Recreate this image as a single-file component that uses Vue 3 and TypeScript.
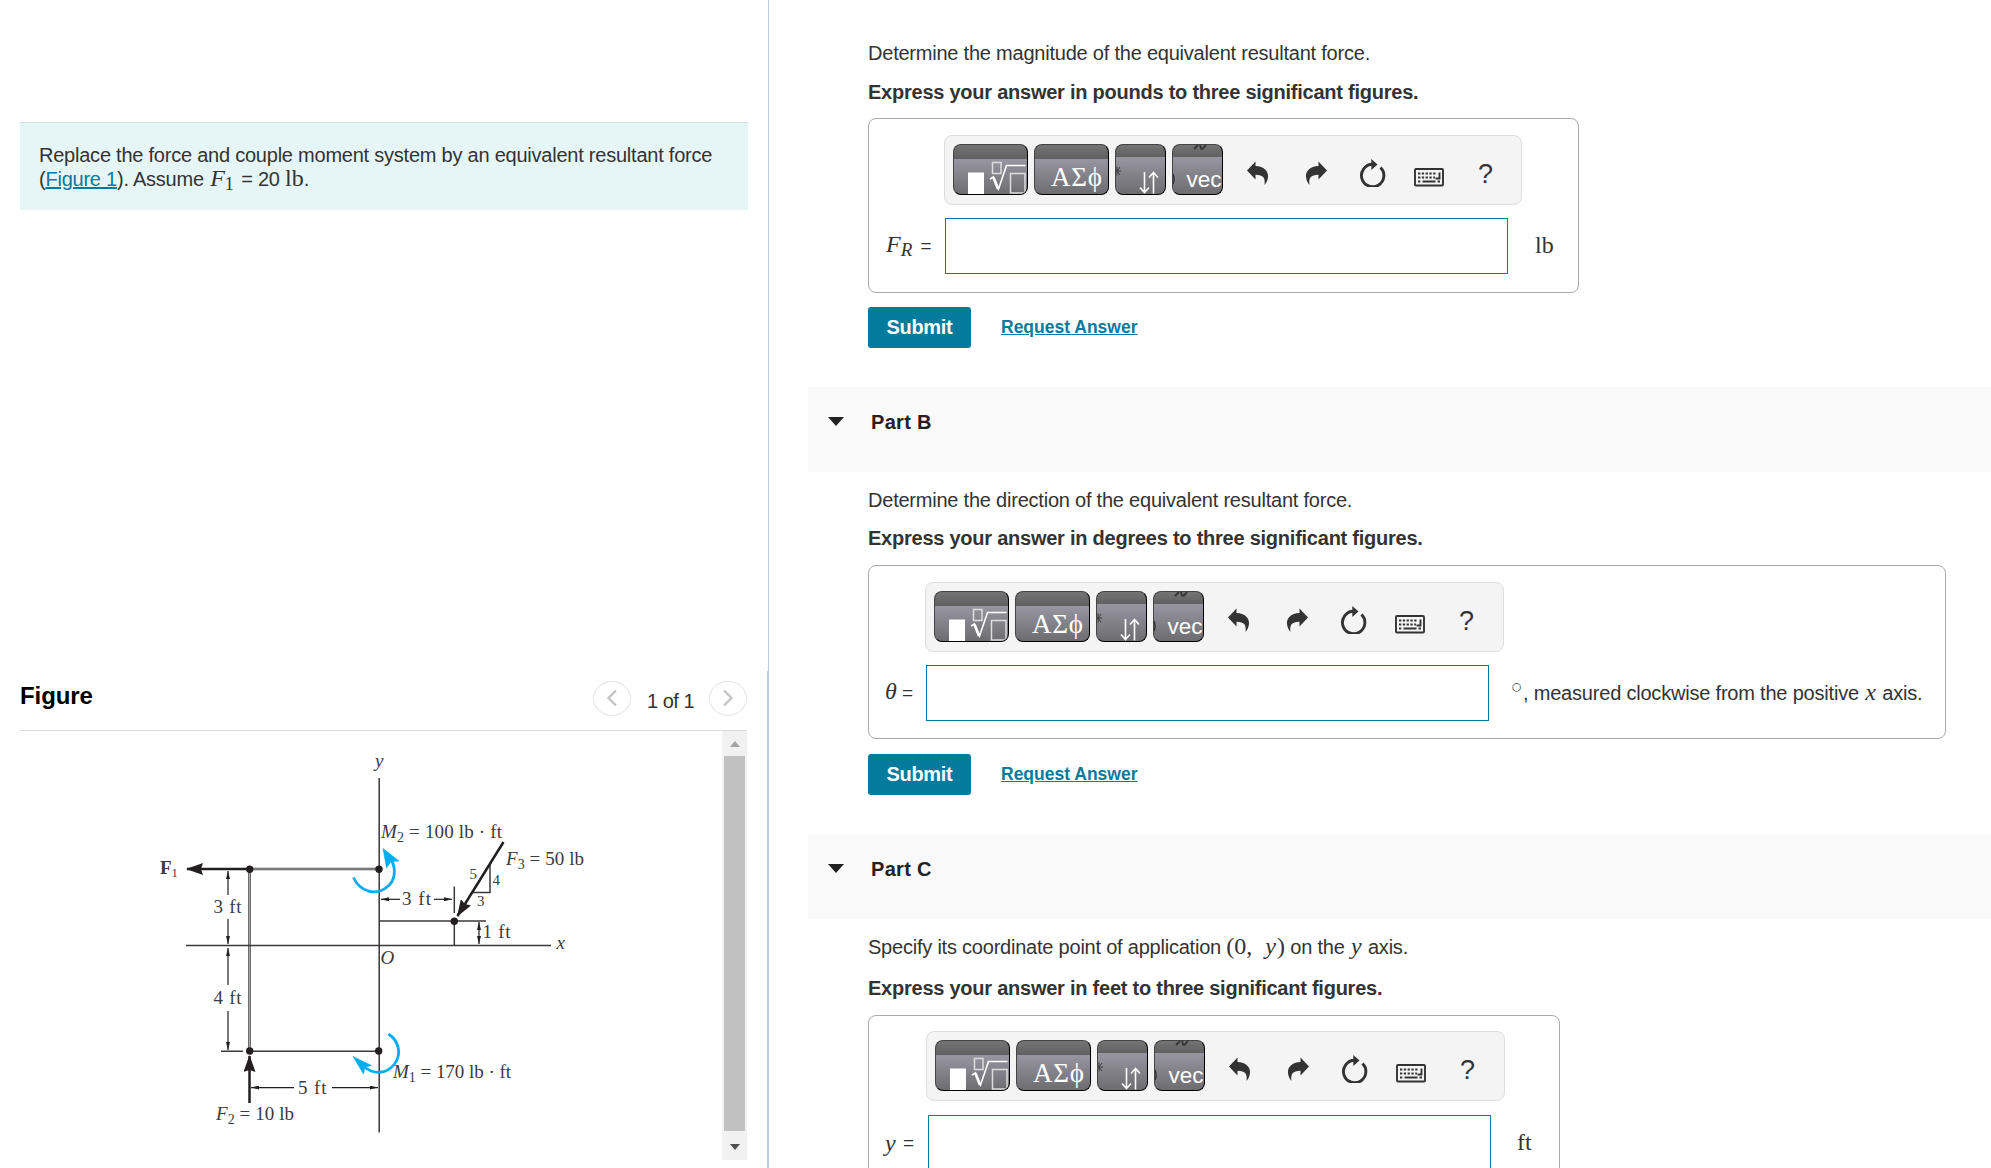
<script setup lang="ts">
import { ref } from 'vue'

interface Segment {
  text: string
  math?: 'italic' | 'roman' | 'sub' | 'deg'
}

interface Part {
  id: string
  title?: string
  prompt: Segment[]
  instruction: string
  label: Segment[]
  unit: Segment[]
  submittable?: boolean
}

const parts: Part[] = [
  {
    id: 'a',
    prompt: [{ text: 'Determine the magnitude of the equivalent resultant force.' }],
    instruction: 'Express your answer in pounds to three significant figures.',
    label: [{ text: 'F', math: 'italic' }, { text: 'R', math: 'sub' }],
    unit: [{ text: 'lb', math: 'roman' }],
    submittable: true,
  },
  {
    id: 'b',
    title: 'Part B',
    prompt: [{ text: 'Determine the direction of the equivalent resultant force.' }],
    instruction: 'Express your answer in degrees to three significant figures.',
    label: [{ text: 'θ', math: 'italic' }],
    unit: [
      { text: '○', math: 'deg' },
      { text: ', measured clockwise from the positive ' },
      { text: 'x', math: 'italic' },
      { text: ' axis.' },
    ],
    submittable: true,
  },
  {
    id: 'c',
    title: 'Part C',
    prompt: [
      { text: 'Specify its coordinate point of application ' },
      { text: '(0,\u2002', math: 'roman' },
      { text: 'y', math: 'italic' },
      { text: ')', math: 'roman' },
      { text: ' on the ' },
      { text: 'y', math: 'italic' },
      { text: ' axis.' },
    ],
    instruction: 'Express your answer in feet to three significant figures.',
    label: [{ text: 'y', math: 'italic' }],
    unit: [{ text: 'ft', math: 'roman' }],
  },
]

const answers = ref<Record<string, string>>({ a: '', b: '', c: '' })
</script>

<template>
  <div class="page">
    <aside class="left">
      <div class="problem">
        <span class="line">Replace the force and couple moment system by an equivalent resultant force</span><br />
        <span class="line">(<a href="#">Figure 1</a>). Assume <i class="italic force">F</i><span class="one">1</span> = 20 <span class="roman">lb</span>.</span>
      </div>

      <section class="figure">
        <header class="figure-head">
          <h2>Figure</h2>
          <div class="pager">
            <button class="round" aria-label="Previous">
              <svg width="12" height="18" viewBox="0 0 12 18"><path d="M10 1.5 2.5 9l7.5 7.5" /></svg>
            </button>
            <span>1 of 1</span>
            <button class="round" aria-label="Next">
              <svg width="12" height="18" viewBox="0 0 12 18"><path d="M2 1.5 9.5 9 2 16.5" /></svg>
            </button>
          </div>
        </header>
        <div class="figure-body">
          <svg class="diagram" width="702" height="429" viewBox="20 731 702 429">
            <defs>
              <marker id="dim" viewBox="0 0 8 4" refX="8" refY="2" markerWidth="8" markerHeight="4" markerUnits="userSpaceOnUse" orient="auto-start-reverse">
                <path d="M0 0 8 2 0 4z" fill="#231f20" />
              </marker>
              <marker id="force" viewBox="0 0 17 12" refX="16" refY="6" markerWidth="17" markerHeight="12" markerUnits="userSpaceOnUse" orient="auto">
                <path d="M0 0 17 6 0 12 2 6z" fill="#231f20" />
              </marker>
            </defs>
            <g class="member">
              <path d="M249.5 869H379M249.5 869V1051" class="edge" />
              <path d="M249.5 869H379M249.5 869V1051" class="core" />
              <path d="M249.5 1051.3H379M379 921H486M454.3 921V945.5" />
              <path d="M379.2 778V1132.5M186 945.6H551" />
              <path d="M454.3 886.5V913M221 1051.3H243M473 892.5H490V865" />
            </g>
            <g class="dims">
              <path d="M228 895V871" /><path d="M228 919V944" />
              <path d="M228 985V948" /><path d="M228 1011V1050" />
              <path d="M294 1087.6H251" /><path d="M332 1087.6H378" />
              <path d="M400 899.3H381" /><path d="M434 899.3H452" />
              <path d="M479 933V922" /><path d="M479 933V944" />
            </g>
            <g class="forces">
              <path d="M249 869H187" />
              <path d="M249.5 1103V1056" />
              <path d="M503.5 842 457.5 916" />
            </g>
            <g fill="#231f20">
              <circle cx="249.7" cy="869.3" r="3.7" />
              <circle cx="379" cy="869.3" r="3.7" />
              <circle cx="249.7" cy="1051" r="3.7" />
              <circle cx="378.7" cy="1051" r="3.7" />
              <circle cx="454.3" cy="921.3" r="3.7" />
            </g>
            <g class="moment">
              <path d="M353.5 877.5C360 892 376 896 387 887 395 881 396.5 870 391.5 860" />
              <path d="M388.5 1034C399 1041 402 1054 394.5 1064 387 1074 374 1075 364.5 1067" />
              <path class="tip" d="M383 848.5 399 861 391 861.5 386.5 868z" />
              <path class="tip" d="M353 1056.5 371.5 1065.5 365 1067 363.5 1074z" />
            </g>
            <g class="labels">
              <text x="375" y="767" class="it">y</text>
              <text x="556.5" y="949" class="it">x</text>
              <text x="380.5" y="964" class="it">O</text>
              <text x="160" y="874"><tspan font-weight="bold">F</tspan><tspan dy="3" font-size="12.5">1</tspan></text>
              <text x="381" y="838" textLength="121"><tspan class="it">M</tspan><tspan dy="4" font-size="14">2</tspan><tspan dy="-4"> = 100 lb · ft</tspan></text>
              <text x="506" y="865" textLength="78"><tspan class="it">F</tspan><tspan dy="4" font-size="14">3</tspan><tspan dy="-4"> = 50 lb</tspan></text>
              <text x="393" y="1078" textLength="118"><tspan class="it">M</tspan><tspan dy="4" font-size="14">1</tspan><tspan dy="-4"> = 170 lb · ft</tspan></text>
              <text x="216" y="1120" textLength="78"><tspan class="it">F</tspan><tspan dy="4" font-size="14">2</tspan><tspan dy="-4"> = 10 lb</tspan></text>
              <text x="213.5" y="913" textLength="28">3 ft</text>
              <text x="213.5" y="1004" textLength="28">4 ft</text>
              <text x="298" y="1094" textLength="28.5">5 ft</text>
              <text x="402" y="905" textLength="29">3 ft</text>
              <text x="482.5" y="938" textLength="28">1 ft</text>
              <text x="469.5" y="878.5" class="small">5</text>
              <text x="492.5" y="884.5" class="small">4</text>
              <text x="477" y="906" class="small">3</text>
            </g>
          </svg>
          <div class="scrollbar">
            <i class="up"></i>
            <div class="thumb"></div>
            <i class="down"></i>
          </div>
        </div>
      </section>
    </aside>

    <main class="right">
      <section v-for="part in parts" :key="part.id" class="part" :class="'part-' + part.id">
        <header v-if="part.title" class="part-head">
          <i class="caret"></i>
          <h3>{{ part.title }}</h3>
        </header>
        <div class="part-body">
          <p class="prompt"><span v-for="(s, i) in part.prompt" :key="i" :class="s.math">{{ s.text }}</span></p>
          <p class="instruction">{{ part.instruction }}</p>
          <div class="answer">
            <div class="label"><span v-for="(s, i) in part.label" :key="i" :class="s.math">{{ s.text }}</span> =</div>
            <div class="entry">
              <div class="toolbar">
                <button class="tool" aria-label="Templates">
                  <svg width="73" height="49" viewBox="1 1 73 49">
                    <path d="M15 28.5H31V50H15z" fill="#fff" />
                    <g fill="none" stroke="#fff">
                      <path d="M39.5 18.5H48V29.5H39.5z" stroke="#ddd" stroke-width="1.5" />
                      <path d="M37 35 40.5 33 45.5 45 53.5 21.5H72.5" stroke-width="1.6" />
                      <path d="M40.5 33.5 45 45" stroke-width="2.6" />
                      <path d="M57.5 29.5H72V49H57.5z" stroke="#ddd" stroke-width="1.5" />
                    </g>
                  </svg>
                </button>
                <button class="tool" aria-label="Symbols">
                  <svg width="73" height="49" viewBox="1 1 73 49">
                    <text x="17" y="42" class="greek" textLength="51">ΑΣϕ</text>
                  </svg>
                </button>
                <button class="tool narrow" aria-label="Arrows">
                  <svg width="49" height="49" viewBox="1 1 49 49">
                    <path d="M2 22.5v9M0 27H6M2 27l3-4M2 27l3 4" stroke="#3a3a3a" fill="none" />
                    <path d="M29.5 28V48.5M25 43.5 29.5 48.5 34 43.5M38.5 49.5V29M34 33.5 38.5 28.5 43 33.5" fill="none" stroke="#fff" stroke-width="1.6" />
                  </svg>
                </button>
                <button class="tool narrow" aria-label="Vectors">
                  <svg width="49" height="49" viewBox="1 1 49 49">
                    <path d="M22 5 26 1M28 1 29 4.5 31 4.5 34 1" fill="none" stroke="#333" stroke-width="1.8" />
                    <path d="M1 30q2 5 0 10" fill="none" stroke="#333" stroke-width="1.5" />
                    <text x="14.5" y="42.5" class="vec" textLength="35">vec</text>
                  </svg>
                </button>
                <div class="actions">
                  <button aria-label="Undo">
                    <svg width="30" height="30" viewBox="0 0 30 30"><path d="M4 13.5 12.5 4.5V9C21 9.500 25.500 14 25 20 24.700 23.500 23 26.500 21.500 28 22.500 21 20.500 18 12.500 17.800V22.500z" /></svg>
                  </button>
                  <button aria-label="Redo">
                    <svg width="30" height="30" viewBox="0 0 30 30"><path d="M27 13.500 18.500 4.500V9C10 9.500 5.500 14 6 20 6.300 23.500 8 26.500 9.500 28 8.500 21 10.500 18 18.500 17.800V22.500z" /></svg>
                  </button>
                  <button aria-label="Reset">
                    <svg width="30" height="30" viewBox="0 0 30 30"><path d="M14.3 2 20.5 7.5 14.3 13z" /><path d="M15.5 7.300A11.200 11.200 0 1 0 23.500 10.500" fill="none" stroke="#333" stroke-width="2.900" /></svg>
                  </button>
                  <button aria-label="Keyboard">
                    <svg width="30" height="30" viewBox="0 0 30 30">
                      <rect x="1" y="12" width="28" height="16.5" rx="1" fill="none" stroke="#333" stroke-width="1.9" />
                      <path d="M4 16.5H22M4 20.5H21" stroke="#333" stroke-width="2" fill="none" stroke-dasharray="2.3 1.5" />
                      <path d="M4 24.5H6.3M8.5 24.5H21.5M23.5 24.5H26M25.5 15.5V21.5H21.5" stroke="#333" stroke-width="1.9" fill="none" />
                    </svg>
                  </button>
                  <button class="help" aria-label="Help">?</button>
                </div>
              </div>
              <input v-model="answers[part.id]" :aria-label="part.instruction" />
            </div>
            <div class="unit"><span v-for="(s, i) in part.unit" :key="i" :class="s.math">{{ s.text }}</span></div>
          </div>
          <div v-if="part.submittable" class="submit-row">
            <button class="submit">Submit</button>
            <a href="#" class="request">Request Answer</a>
          </div>
        </div>
      </section>
    </main>
  </div>
</template>

<style>
body {
  margin: 0;
  overflow: hidden;
  background: #fff;
}
</style>

<style scoped>
.page {
  display: flex;
  width: 1991px;
  height: 1168px;
  overflow: hidden;
  font-family: 'Liberation Sans', Arial, sans-serif;
  font-size: 20px;
  color: #333;
}
.page * {
  box-sizing: border-box;
}
button {
  padding: 0;
  border: 0;
  background: none;
  font-family: inherit;
  color: inherit;
}
h2,
h3,
p {
  margin: 0;
}
a {
  color: #047a9c;
}
.italic,
.roman,
.sub,
.deg,
.one {
  font-family: 'Liberation Serif', 'Times New Roman', serif;
  font-size: 24px;
  line-height: 0;
  letter-spacing: 0;
}
.italic {
  font-style: italic;
}
.force {
  margin-left: 1px;
}
.sub,
.one {
  font-size: 18px;
  position: relative;
  top: 4px;
}
.one {
  margin-right: 2px;
}
.sub {
  font-style: italic;
}
.deg {
  display: inline-block;
  width: 11px;
  font-family: 'DejaVu Sans', sans-serif;
  font-size: 11px;
  position: relative;
  top: -10px;
}

/* problem statement and figure */
.left {
  display: flex;
  flex-direction: column;
  flex: none;
  width: 769px;
  padding: 122px 20px 0;
  border-right: 1px solid #b9cbdc;
}
.problem {
  height: 88px;
  padding: 20px 19px 0;
  border-top: 1px solid #d5dfdf;
  background: #e6f6f7;
  line-height: 24px;
  white-space: nowrap;
}
.line {
  letter-spacing: -0.23px;
}
.figure {
  display: flex;
  flex-direction: column;
  margin-top: 461px;
  margin-right: -20px;
  height: 497px;
  border-right: 1px solid #b9cbdc;
}
.figure-head {
  display: flex;
  justify-content: space-between;
  width: 727px;
  height: 60px;
  padding-top: 10px;
  border-bottom: 1px solid #d9d9d9;
}
.figure-head h2 {
  font-size: 24px;
  line-height: 30px;
  letter-spacing: -0.1px;
  color: #000;
}
.pager {
  display: flex;
  align-items: center;
  gap: 16px;
  height: 34px;
}
.pager span {
  width: 46px;
  padding-top: 6px;
  letter-spacing: -0.5px;
  white-space: nowrap;
}
.round {
  display: flex;
  align-items: center;
  justify-content: center;
  width: 38px;
  height: 35px;
  border: 1px solid #e4e4e4;
  border-radius: 50%;
}
.round path {
  fill: none;
  stroke: #c4c4c4;
  stroke-width: 2.4;
}
.figure-body {
  display: flex;
}
.scrollbar {
  display: flex;
  flex-direction: column;
  align-items: center;
  justify-content: space-between;
  width: 25px;
  height: 429px;
  padding: 10px 0;
  background: #f1f1f1;
}
.thumb {
  width: 21px;
  height: 375px;
  margin-bottom: 5px;
  background: #c1c1c1;
}
.up,
.down {
  border: 5.5px solid transparent;
  border-top-width: 0;
  border-bottom: 6px solid #a3a3a3;
}
.down {
  border-top: 6px solid #505050;
  border-bottom-width: 0;
}
.member path {
  fill: none;
  stroke: #3b3839;
  stroke-width: 1.5;
}
.member .edge {
  stroke: #4d4a4b;
  stroke-width: 2.7;
}
.member .core {
  stroke: #aaa;
  stroke-width: 1.2;
}
.dims path {
  stroke: #231f20;
  stroke-width: 1.2;
  marker-end: url(#dim);
}
.forces path {
  stroke: #231f20;
  stroke-width: 2.5;
  marker-end: url(#force);
}
.moment path {
  fill: none;
  stroke: #00aeef;
  stroke-width: 2.8;
}
.moment .tip {
  fill: #00aeef;
  stroke-width: 0.6;
}
.labels {
  font-family: 'Liberation Serif', 'Times New Roman', serif;
  font-size: 19px;
  fill: #3a3a3f;
}
.it {
  font-style: italic;
}
.small {
  font-size: 15px;
}

/* answer column */
.right {
  flex: none;
  width: 1183px;
  margin-left: 39px;
}
.part-a {
  height: 387px;
  padding-top: 39px;
}
.part-b {
  height: 447px;
}
.part-head {
  display: flex;
  align-items: center;
  height: 85px;
  padding: 0 0 15px 20px;
  background: #f9f9f9;
}
.caret {
  border: 8px solid transparent;
  border-top: 9px solid #222;
  border-bottom: 0;
  margin-bottom: 1px;
}
.part-head h3 {
  margin-left: 27px;
  font-size: 20px;
  letter-spacing: 0.3px;
  color: #222;
}
.part-body {
  padding-left: 60px;
}
.part-b .part-body,
.part-c .part-body {
  padding-top: 14px;
}
.prompt {
  height: 39px;
  line-height: 28px;
  letter-spacing: -0.22px;
  white-space: pre;
}
.part-b .prompt {
  height: 38px;
}
.part-c .prompt {
  height: 41px;
}
.part-c .prompt .italic {
  padding: 0 1px;
}
.instruction {
  height: 40px;
  line-height: 28px;
  font-weight: bold;
  letter-spacing: -0.24px;
  white-space: nowrap;
}
.part-b .instruction,
.part-c .instruction {
  height: 41px;
}
.answer {
  display: flex;
  align-items: flex-end;
  width: 711px;
  height: 175px;
  padding: 0 0 18px 16px;
  border: 1px solid #a9a9a9;
  border-radius: 8px;
}
.part-b .answer {
  width: 1078px;
  height: 174px;
  padding-bottom: 17px;
}
.part-c .answer {
  width: 692px;
}
.label {
  width: 59px;
  height: 56px;
  line-height: 56px;
  white-space: pre;
  font-size: 19px;
}
.part-a .label {
  padding-left: 1px;
}
.part-a .label .sub {
  margin-right: 3px;
  font-size: 19px;
}
.part-b .label {
  width: 40px;
}
.part-c .label {
  width: 41px;
  word-spacing: 2px;
}
.part-c .label .italic {
  position: relative;
  top: 2px;
}
.entry {
  width: 579px;
}
.toolbar {
  display: flex;
  gap: 6px;
  width: 579px;
  height: 70px;
  margin-bottom: 13px;
  padding: 8px;
  border: 1px solid #dedede;
  border-radius: 8px;
  background: #f4f4f4;
}
.part-a .toolbar {
  width: 578px;
}
.part-c .toolbar {
  margin-bottom: 14px;
}
.tool {
  flex: none;
  width: 75px;
  height: 51px;
  overflow: hidden;
  border: 1px solid #555;
  border-color: #444 #000 #000 #444;
  border-radius: 8px;
  background: linear-gradient(#747474, #606060) 0 0 / 100% 14px no-repeat, linear-gradient(#9896a2 28%, #6d6d70);
}
.tool.narrow {
  width: 51px;
  background: linear-gradient(#747474, #606060) 0 0 / 100% 12px no-repeat, linear-gradient(#9896a2 24%, #6d6d70);
}
.tool svg {
  display: block;
}
.greek {
  font-family: 'Liberation Serif', 'DejaVu Serif', serif;
  font-size: 27px;
  fill: #fff;
}
.vec {
  font-size: 22.5px;
  fill: #fff;
}
.actions {
  display: flex;
}
.actions button {
  flex: none;
  width: 57px;
  height: 51px;
}
.actions svg {
  display: block;
  margin: 0 auto;
  position: relative;
  top: 2px;
  fill: #333;
}
.actions .help {
  padding-top: 9px;
  font-size: 27px;
}
input {
  display: block;
  width: 563px;
  height: 56px;
  margin-left: 1px;
  border: 1px solid #047a9c;
  outline: 0;
  padding: 0 8px;
  font-size: 20px;
}
.part-c input {
  margin-left: 2px;
}
.unit {
  height: 56px;
  margin-left: 12px;
  line-height: 56px;
  white-space: pre;
}
.part-b .unit {
  margin-left: 8px;
  letter-spacing: -0.2px;
}
.part-b .unit .italic {
  padding: 0 1px;
}
.submit-row {
  display: flex;
  align-items: center;
  gap: 30px;
  margin-top: 14px;
}
.part-b .submit-row {
  margin-top: 15px;
}
.submit {
  width: 103px;
  height: 41px;
  border-radius: 3px;
  background: #047a9c;
  color: #fff;
  font-size: 20px;
  font-weight: bold;
  letter-spacing: -0.3px;
}
.request {
  font-size: 17.5px;
  font-weight: bold;
}
</style>
